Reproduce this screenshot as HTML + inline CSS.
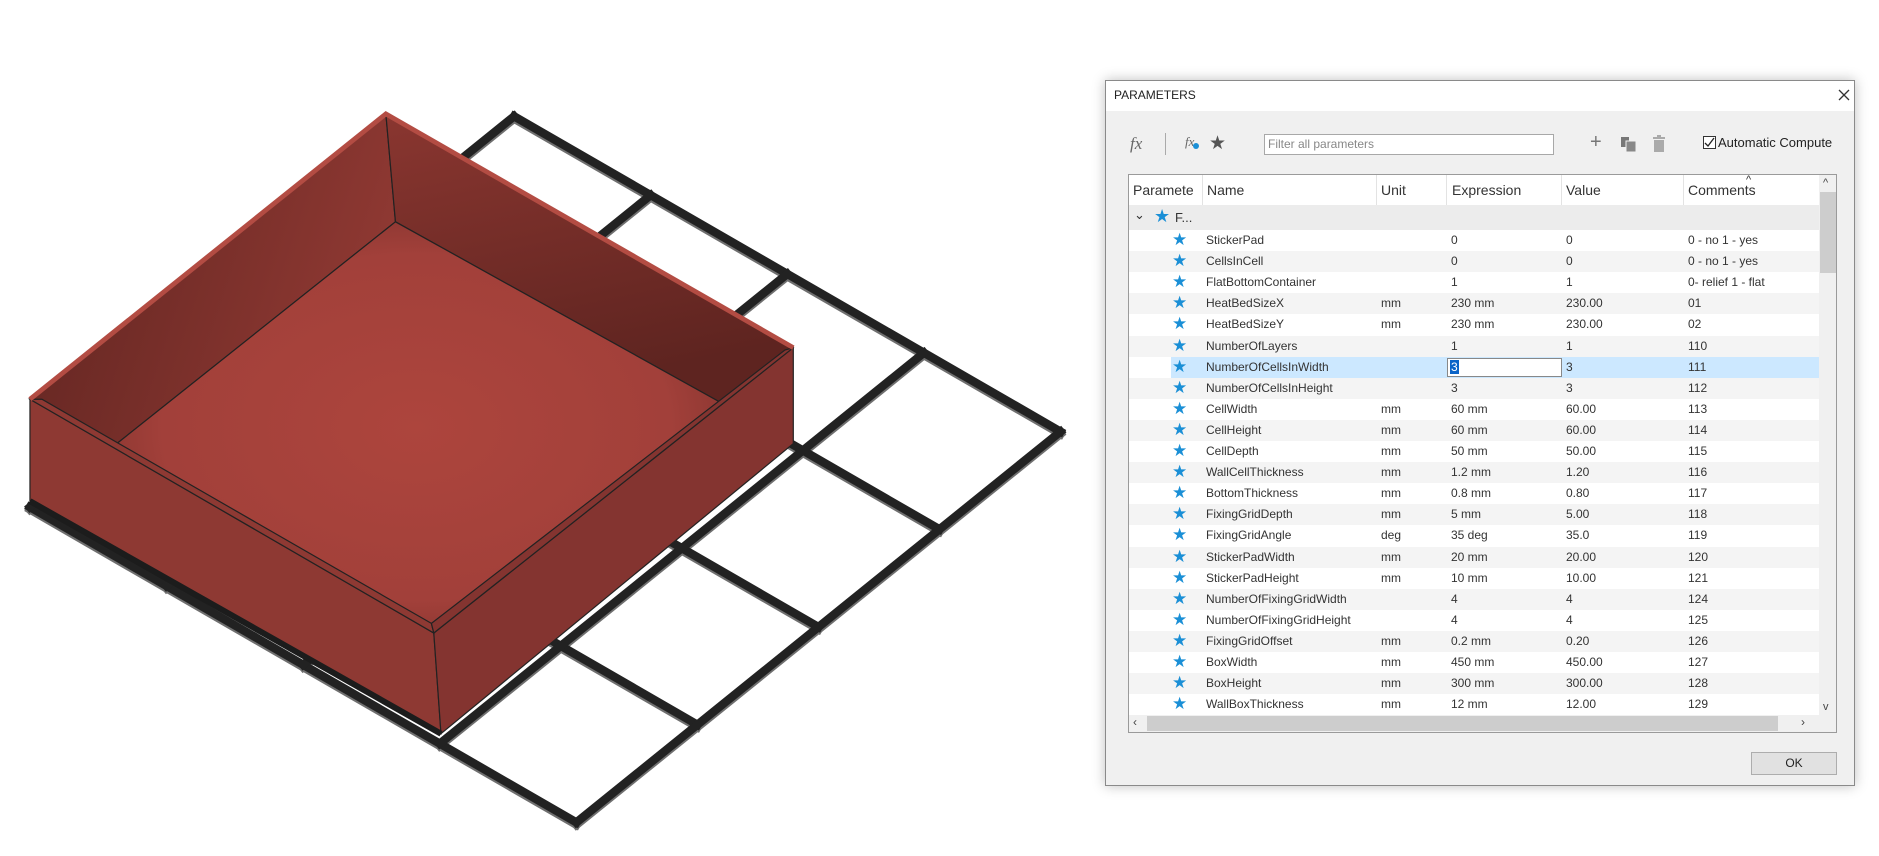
<!DOCTYPE html>
<html><head><meta charset="utf-8"><style>
*{margin:0;padding:0;box-sizing:border-box}
body{width:1879px;height:856px;background:#fff;position:relative;overflow:hidden;font-family:"Liberation Sans",sans-serif;color:#333}
.a{position:absolute}
#dlg{left:1105px;top:80px;width:750px;height:706px;background:#f0f0f0;border:1px solid #8a8a8a;box-shadow:0 0 12px rgba(0,0,0,.25)}
#tb{left:0;top:0;width:748px;height:30px;background:#fff}
#tbl{left:22px;top:93px;width:709px;height:559px;background:#fff;border:1px solid #9a9a9a;overflow:hidden}
.row{position:absolute;left:0;width:690px;height:21px;font-size:12px;line-height:21px}
.row span{position:absolute;top:0}
.hd span{position:absolute;top:0;font-size:14px;line-height:30px;color:#333}
.st{color:#1a8fd6;font-size:17px}
</style></head><body>
<svg class="a" style="left:0;top:0" width="1879" height="856" viewBox="0 0 1568 714" preserveAspectRatio="none">
<defs>
<radialGradient id="fl" cx="0.5" cy="0.5" r="0.6"><stop offset="0" stop-color="#ad453d"/><stop offset="0.7" stop-color="#a2403a"/><stop offset="1" stop-color="#7e312c"/></radialGradient>
<linearGradient id="wl" x1="0" y1="0" x2="1" y2="0.3"><stop offset="0" stop-color="#5e2420"/><stop offset="1" stop-color="#8e3832"/></linearGradient>
<linearGradient id="wr" x1="0" y1="0" x2="0.3" y2="1"><stop offset="0" stop-color="#8a3630"/><stop offset="1" stop-color="#5e2420"/></linearGradient>
</defs>
<g stroke="#111" stroke-width="7" stroke-linecap="square" fill="none" transform="translate(0,2)" opacity="0.6">
<path d="M429 97L885 360M328 178.5L784 441.5M227 260L683 523M126 341.5L582 604.5M25 423L481 686"/>
<path d="M429 97L25 423M543 162.75L139 488.75M657 228.5L253 554.5M771 294.25L367 620.25M885 360L481 686"/>
</g>
<g stroke="#222" stroke-width="7" stroke-linecap="square" fill="none">
<path d="M429 97L885 360M328 178.5L784 441.5M227 260L683 523M126 341.5L582 604.5M25 423L481 686"/>
<path d="M429 97L25 423M543 162.75L139 488.75M657 228.5L253 554.5M771 294.25L367 620.25M885 360L481 686"/>
</g>
<polygon points="25,333 362,528 368,612 25,418" fill="#8e3933" stroke="#222" stroke-width="1"/>
<polygon points="362,528 662,290 662,370 368,612" fill="#843430" stroke="#222" stroke-width="1"/>
<polygon points="25,333 322,95 330,185 95,372" fill="url(#wl)" stroke="#222" stroke-width="1"/>
<polygon points="322,95 662,290 600,335 330,185" fill="url(#wr)" stroke="#222" stroke-width="1"/>
<polygon points="330,185 600,335 362,528 95,372" fill="url(#fl)" stroke="#222" stroke-width="1"/>
<polygon points="25,333 35,333 360,520 362,528" fill="#8e3933" stroke="#222" stroke-width="1"/>
<polygon points="662,290 655,292 360,520 362,528" fill="#843430" stroke="#222" stroke-width="1"/>
<polyline points="25,333 322,95 662,290" fill="none" stroke="#b34c43" stroke-width="4"/>
<polyline points="25,418 368,612" fill="none" stroke="#1c1c1c" stroke-width="5"/>
</svg>

<div id="dlg" class="a">
 <div id="tb" class="a"><span class="a" style="left:8px;top:7px;font-size:12px;color:#222">PARAMETERS</span>
  <svg class="a" style="left:732px;top:8px" width="12" height="12"><path d="M1 1L11 11M11 1L1 11" stroke="#333" stroke-width="1.3"/></svg></div>
 <span class="a" style="left:24px;top:53px;font-family:'Liberation Serif',serif;font-style:italic;font-size:17px;color:#666">fx</span>
 <div class="a" style="left:59px;top:52px;width:1px;height:22px;background:#aaa"></div>
 <span class="a" style="left:79px;top:53px;font-family:'Liberation Serif',serif;font-style:italic;font-size:13px;color:#666">fx</span>
 <span class="a" style="left:87px;top:62px;width:6px;height:6px;border-radius:3px;background:#1a8fd6"></span>
 <span class="a" style="left:103px;top:51px;font-size:19px;color:#555">★</span>
 <div class="a" style="left:158px;top:53px;width:290px;height:21px;background:#fff;border:1px solid #a8a8a8;font-size:12px;line-height:19px;padding-left:3px;color:#888">Filter all parameters</div>
 <span class="a" style="left:484px;top:50px;font-size:20px;color:#777">+</span>
 <svg class="a" style="left:514px;top:55px" width="18" height="17"><rect x="1" y="1" width="8" height="10" fill="#777"/><rect x="6" y="5" width="10" height="11" fill="#888" stroke="#f0f0f0"/></svg>
 <svg class="a" style="left:546px;top:54px" width="14" height="18"><rect x="1" y="2" width="12" height="2" fill="#aaa"/><rect x="5" y="0" width="4" height="2" fill="#aaa"/><rect x="2" y="5" width="10" height="12" fill="#aaa"/></svg>
 <div class="a" style="left:597px;top:55px;width:13px;height:13px;border:1px solid #333;background:#fff"><svg width="11" height="11" style="display:block"><path d="M1 6L4 9L10 1" stroke="#222" fill="none" stroke-width="1.3"/></svg></div>
 <span class="a" style="left:612px;top:54px;font-size:13px;color:#222">Automatic Compute</span>

 <div id="tbl" class="a">
  <div class="hd a" style="left:0;top:0;width:690px;height:30px;background:#fff">
   <span style="left:4px">Paramete</span><span style="left:78px">Name</span><span style="left:252px">Unit</span><span style="left:323px">Expression</span><span style="left:437px">Value</span><span style="left:559px">Comments</span>
   <span style="left:617px;top:-10px;font-size:11px">^</span>
   <div class="a" style="left:73px;top:0;width:1px;height:30px;background:#e3e3e3"></div>
   <div class="a" style="left:247px;top:0;width:1px;height:30px;background:#e3e3e3"></div>
   <div class="a" style="left:317px;top:0;width:1px;height:30px;background:#e3e3e3"></div>
   <div class="a" style="left:432px;top:0;width:1px;height:30px;background:#e3e3e3"></div>
   <div class="a" style="left:554px;top:0;width:1px;height:30px;background:#e3e3e3"></div>
  </div>
  <div class="a" style="left:0;top:30px;width:690px;height:25px;background:#ececec">
   <span class="a" style="left:5px;top:2px;font-size:13px;color:#333">⌄</span>
   <span class="a st" style="left:25px;top:1px;font-size:18px">★</span>
   <span class="a" style="left:46px;top:5px;font-size:13px">F...</span>
  </div>
  <div class="a" style="left:690px;top:0;width:18px;height:559px;background:#f0f0f0">
   <span class="a" style="left:4px;top:2px;font-size:11px;color:#444">^</span>
   <div class="a" style="left:1px;top:17px;width:16px;height:81px;background:#cdcdcd"></div>
   <span class="a" style="left:4px;top:526px;font-size:11px;color:#444">v</span>
  </div>
  <div class="a" style="left:0;top:539px;width:690px;height:19px;background:#f0f0f0">
   <span class="a" style="left:4px;top:1px;font-size:12px;color:#444">‹</span>
   <div class="a" style="left:18px;top:2px;width:631px;height:15px;background:#cdcdcd"></div>
   <span class="a" style="left:672px;top:1px;font-size:12px;color:#444">›</span>
  </div>
  <div id="rows"></div>
 </div>
 <div class="a" style="left:645px;top:671px;width:86px;height:23px;background:#e1e1e1;border:1px solid #adadad;font-size:12px;line-height:21px;text-align:center;color:#222">OK</div>
</div>
<script>
var d=[["StickerPad","","0","0","0 - no 1 - yes"],["CellsInCell","","0","0","0 - no 1 - yes"],["FlatBottomContainer","","1","1","0- relief 1 - flat"],["HeatBedSizeX","mm","230 mm","230.00","01"],["HeatBedSizeY","mm","230 mm","230.00","02"],["NumberOfLayers","","1","1","110"],["NumberOfCellsInWidth","","3","3","111"],["NumberOfCellsInHeight","","3","3","112"],["CellWidth","mm","60 mm","60.00","113"],["CellHeight","mm","60 mm","60.00","114"],["CellDepth","mm","50 mm","50.00","115"],["WallCellThickness","mm","1.2 mm","1.20","116"],["BottomThickness","mm","0.8 mm","0.80","117"],["FixingGridDepth","mm","5 mm","5.00","118"],["FixingGridAngle","deg","35 deg","35.0","119"],["StickerPadWidth","mm","20 mm","20.00","120"],["StickerPadHeight","mm","10 mm","10.00","121"],["NumberOfFixingGridWidth","","4","4","124"],["NumberOfFixingGridHeight","","4","4","125"],["FixingGridOffset","mm","0.2 mm","0.20","126"],["BoxWidth","mm","450 mm","450.00","127"],["BoxHeight","mm","300 mm","300.00","128"],["WallBoxThickness","mm","12 mm","12.00","129"]];
var h="";d.forEach(function(r,i){var top=55+i*21.1;var bg=i%2?"#f4f4f4":"#fff";var sel=i==6;
h+='<div class="row" style="top:'+top+'px;background:'+bg+'">'+(sel?'<div class="a" style="left:42px;top:0;width:648px;height:21px;background:#cce8ff"></div>':'')+
'<span class="st" style="left:43px;line-height:20px">★</span><span style="left:77px">'+r[0]+'</span><span style="left:252px">'+r[1]+'</span>'+
(sel?'<div class="a" style="left:318px;top:1px;width:115px;height:19px;background:#fff;border:1px solid #888"></div><span style="left:321px;top:3px;line-height:14px;background:#0a64c8;color:#fff;padding:0 1px">3</span>':'<span style="left:322px">'+r[2]+'</span>')+
'<span style="left:437px">'+r[3]+'</span><span style="left:559px">'+r[4]+'</span></div>';});
document.getElementById("rows").outerHTML=h;
</script>
</body></html>
